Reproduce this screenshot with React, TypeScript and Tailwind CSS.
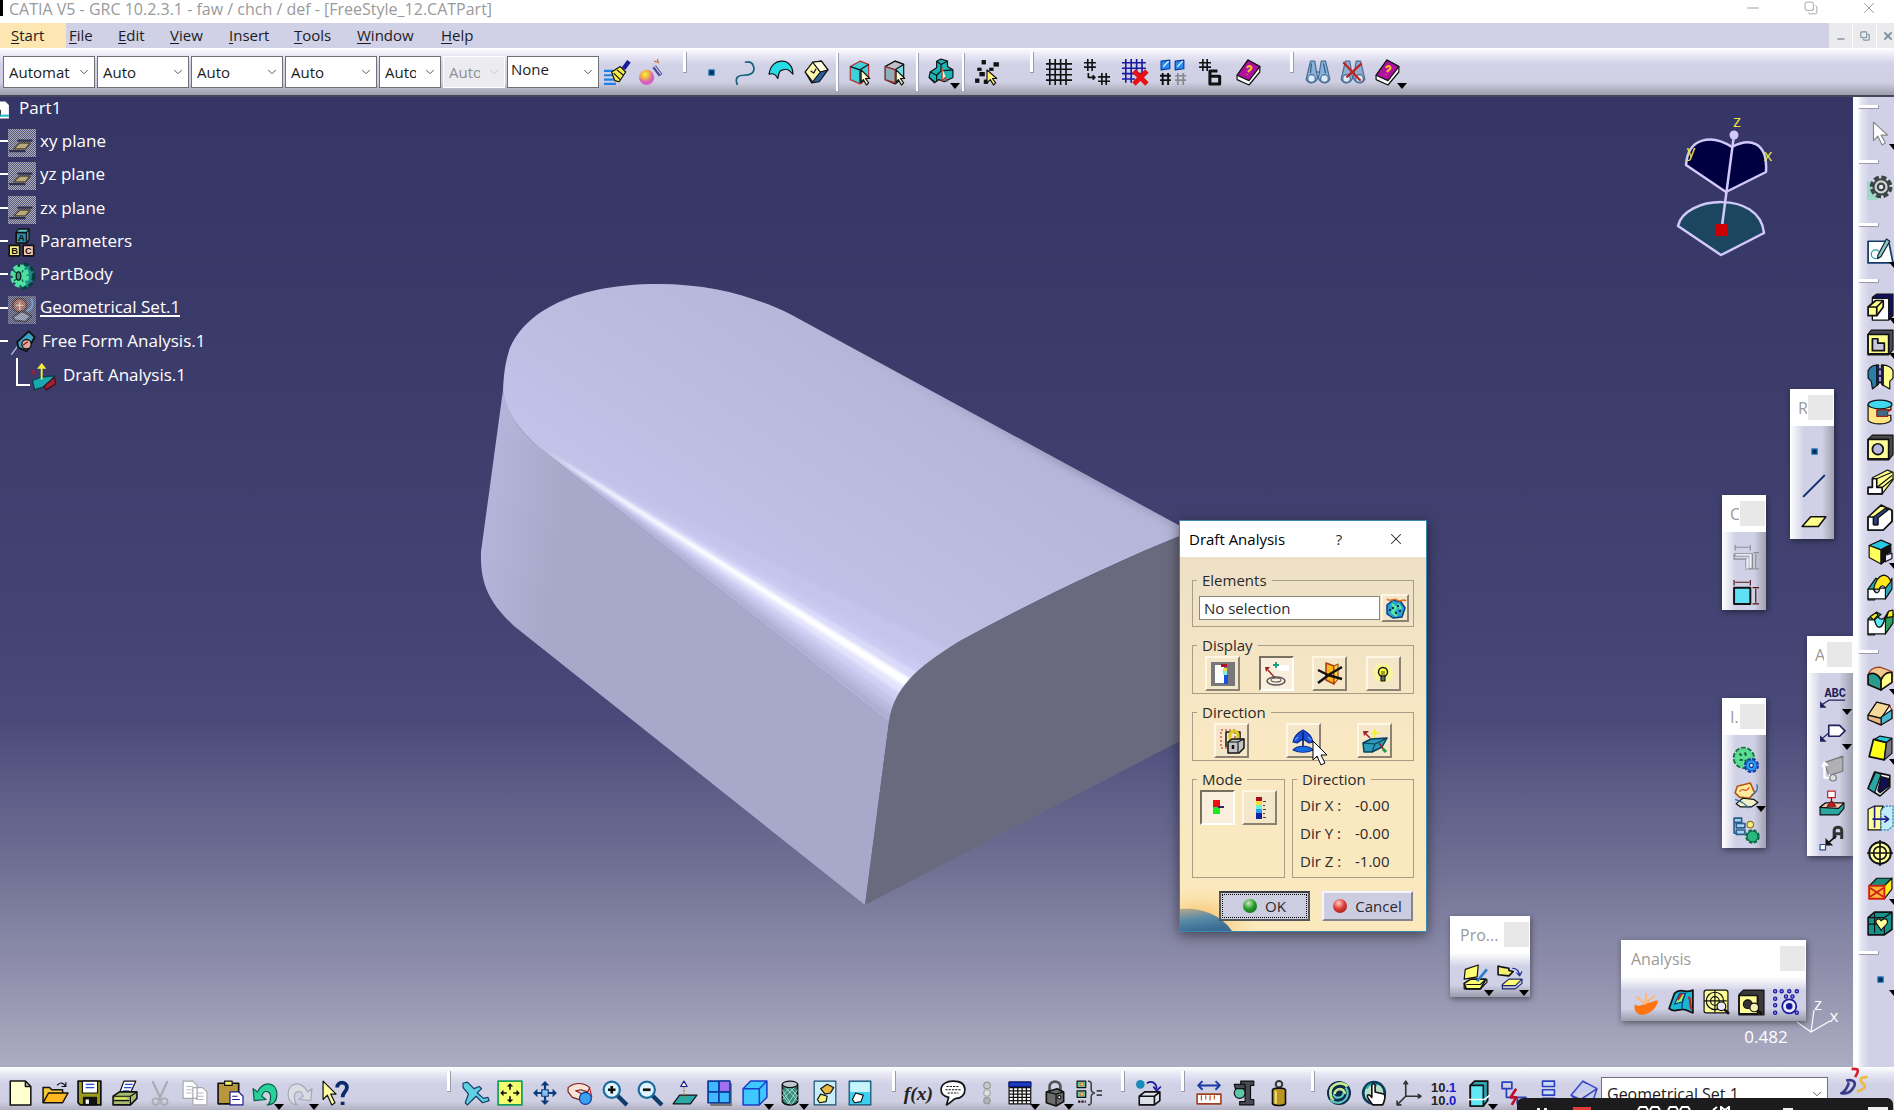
import type { ReactNode } from "react";
import { ChevronDown, Copy, Minus, X } from "lucide-react";

const icons: Record<string, ReactNode> = {
  brush: (
    <>
      <path d="M0 11h9M0 15h8M0 19h9M0 23h11" stroke="#1f7fe8" strokeWidth="2" />
      <path d="M7 12l8-5 5 5-6 9-4-1z" fill="#f5ee4a" />
      <path d="M9 13l6 6M12 10l6 5" />
      <path d="M18 9l5-7" stroke="#1a1a9c" strokeWidth="4" />
    </>
  ),
  wand: (
    <>
      <circle cx="7" cy="17" r="7" fill="url(#ballFill)" stroke="none" />
      <path d="M14 7l6 8" stroke="#4b4b9c" strokeWidth="4" />
      <path d="M14 6l6 8" stroke="#d8d8f4" strokeWidth="1" />
      <path d="M14 2l4 1M17 0l1 4" stroke="#d07030" />
    </>
  ),
  point: <rect x="10" y="10" width="5" height="5" fill="#003060" stroke="#2a80c0" strokeWidth="1" />,
  curve: <path d="M4 24c-3-8 2-9 6-9s11-1 9-8c-1-4-4-5-8-4" stroke="#14647e" strokeWidth="1.600" />,
  surface: <path d="M1 14C2 6 7 2 13 2s10 5 10 12c-4-5-7-5-9-4-4 0-4 4-5 8-2-4-5-5-8-4z" fill="#26dde6" />,
  yellowBox: (
    <>
      <path d="M2 12l7-9 8-1 6 8-8 11-7 1z" fill="#2a5f98" />
      <path d="M2 12l7-9 7 9-7 9z" fill="#fdf8b0" />
      <path d="M9 3l8-1 6 8-7 2z" fill="#fffde0" />
      <path d="M7 11l3 2 2-4" />
    </>
  ),
  cubePick: (
    <>
      <path d="M3 7l9-5 8 3v12l-8 6-9-4z" fill="#3fcfd8" stroke="#c02a2a" />
      <path d="M3 7l9 3v12M12 10l8-5" />
      <path d="M13 10v12l2-3 3 5 2-2-3-4h4z" fill="#fff8c8" />
    </>
  ),
  cubePick2: (
    <>
      <path d="M3 7l9-5 8 3v12l-8 6-9-4z" fill="#6fdce2" />
      <path d="M3 7l9-5 8 3-8 5z" fill="#c0c0cc" />
      <path d="M3 7v12l9 3V10z" fill="#8fb0b8" stroke="#a03030" />
      <path d="M13 10v12l2-3 3 5 2-2-3-4h4z" fill="#fff8c8" />
    </>
  ),
  blocksPick: (
    <>
      <path d="M8 2l4-2 6 2v5l5 3v7l-8 4-5-2-4 3-5-5 1-5 6-4z" fill="#1db4b8" />
      <path d="M8 2l4 3 6-3M12 5v6l11-1M2 12l6 3 4-4M8 15v6M1 17l5 4" />
      <path d="M13 8v12l3-3 2 4" stroke="#c02a2a" fill="#fff8c8" />
    </>
  ),
  dotsPick: (
    <>
      <g fill="#111" stroke="none">
        <rect x="7" y="1" width="4" height="4" />
        <rect x="18" y="3" width="5" height="4" />
        <rect x="3" y="8" width="4" height="3" />
        <rect x="14" y="8" width="4" height="3" />
        <rect x="5" y="12" width="5" height="4" />
        <rect x="1" y="18" width="4" height="4" />
        <rect x="9" y="19" width="4" height="4" />
      </g>
      <path d="M12 10v12l3-3 3 5 2-2-3-4h4z" fill="#fff07a" />
    </>
  ),
  grid: <path d="M0 4.500h24M0 9.500h24M0 14.500h24M0 19.500h24M3.500 0v24M8.500 0v24M13.500 0v24M18.500 0v24" strokeWidth="1.500" />,
  gridSnap: <path d="M0 3.500h11M0 7.500h11M3.500 0v11M7.500 0v11M13 16.500h11M13 20.500h11M16.500 13v11M20.500 13v11M4 13v4h6M8 15l2 2-2 2" strokeWidth="1.500" />,
  gridX: (
    <>
      <path d="M0 3.500h22M0 8.500h22M0 13.500h22M0 18.500h12M3.500 0v22M8.500 0v22M13.500 0v14M18.500 0v14" stroke="#1a1a9c" strokeWidth="1.500" />
      <path d="M11 11l12 12M23 11L11 23" stroke="#e81010" strokeWidth="4.500" />
    </>
  ),
  gridFour: (
    <>
      <path d="M1 2l8-1v8l-8 1zM14 2l8-1v8l-8 1z" fill="#2a8cf0" stroke="#0a3c9c" />
      <path d="M3 7l5-5M16 7l5-5" stroke="#fff" />
      <path d="M0 15.500h10M0 19.500h10M2.500 13v11M7.500 13v11" strokeWidth="1.800" />
      <path d="M14 15.500h10M14 19.500h10M16.500 13v11M21.500 13v11" stroke="#888" strokeWidth="1.500" />
    </>
  ),
  gridLock: (
    <>
      <path d="M1 3.500h11M1 7.500h11M4.500 0v11M8.500 0v11" strokeWidth="1.500" />
      <path d="M18 11h-7v12h9v-7h-8" strokeWidth="2.800" />
    </>
  ),
  book: (
    <>
      <path d="M1 15L11 1l11 6v5L12 24 1 19z" fill="#fff" />
      <path d="M1 15L11 1l11 6-10 13z" fill="#b010a0" />
      <path d="M10 8c3-3 6 0 3 2l-2 2M10 14v.500" stroke="#f5c020" strokeWidth="2" />
    </>
  ),
  binocular: (
    <>
      <path d="M5 2h4l2 12a5 5 0 0 1-10 5zM19 2h-4l-2 12a5 5 0 0 0 10 5z" fill="#88b4dc" stroke="#4a6c94" />
      <circle cx="6" cy="18" r="3.500" fill="#d8ecfa" stroke="#4a6c94" />
      <circle cx="18" cy="18" r="3.500" fill="#d8ecfa" stroke="#4a6c94" />
      <path d="M10 12h4M6 4l-1 9M17 4l2 9" stroke="#345880" />
    </>
  ),
  binocularX: (
    <>
      <path d="M5 2h4l2 12a5 5 0 0 1-10 5zM19 2h-4l-2 12a5 5 0 0 0 10 5z" fill="#8fb0cc" stroke="#4a6c94" />
      <circle cx="6" cy="18" r="3.500" fill="#d8ecfa" stroke="#4a6c94" />
      <circle cx="18" cy="18" r="3.500" fill="#d8ecfa" stroke="#4a6c94" />
      <path d="M3 3l16 17M20 4L6 17" stroke="#c42020" strokeWidth="2" />
    </>
  ),
  arrow: <path d="M6 2v17l4-4 4 8 3-2-4-7h6z" fill="#fff" stroke="#888" />,
  gear: (
    <>
      <path d="M0 5l10 4v14H0z" fill="#9fd8c8" stroke="none" />
      <circle cx="13" cy="11" r="9" stroke="#3c4444" strokeWidth="3" strokeDasharray="4.700 2.370" />
      <circle cx="13" cy="11" r="7" fill="#cfd4d4" stroke="#3c4444" strokeWidth="1.800" />
      <circle cx="13" cy="11" r="3" fill="#e8e8f0" stroke="#3c4444" strokeWidth="2" />
    </>
  ),
  sketch: (
    <>
      <path d="M1 3h19l4 20H1z" fill="#fff" stroke="#123c6c" strokeWidth="1.600" />
      <circle cx="8" cy="15" r="4" stroke="#2a9c9c" />
      <path d="M10 16l8-15 3 2-8 14-3 2z" fill="#8fc8c8" stroke="#123" />
    </>
  ),
  pad: (
    <>
      <path d="M5 3l4-3h15v20l-4 4H5z" fill="#101060" />
      <path d="M5 4h15v20H5z" fill="#fff" />
      <path d="M1 12l7-6h7v6l-6 8H1z" fill="#ffff8c" strokeWidth="1.600" />
      <path d="M1 12h8v8M9 12l6-6" strokeWidth="1.600" />
    </>
  ),
  pocket: (
    <>
      <path d="M1 5l3-4h20v18l-4 5H1z" fill="#4a4a5c" />
      <path d="M1 5h19v18H1z" fill="#ffff8c" strokeWidth="1.600" />
      <path d="M5 9h5v4h6v7H5z" fill="#c8c8dc" strokeWidth="1.600" />
    </>
  ),
  shaft: (
    <>
      <path d="M1 6c3-5 6-5 9-5v18l-5 4-1-7-3-3z" fill="#2a7fa8" />
      <path d="M14 1c5 0 8 1 10 5v7l-3 3v7l-7-4z" fill="#ffff8c" />
      <path d="M9 1h6v19l-3-3-3 3z" fill="#20205c" />
      <path d="M12 0v24" stroke="#fff" strokeDasharray="4 2" />
    </>
  ),
  groove: (
    <>
      <path d="M1 5v15c4 4 17 4 21 0v-5H10v-5h12V5z" fill="#ffe680" />
      <ellipse cx="12" cy="5" rx="11" ry="4" fill="#3fd8f0" />
      <path d="M9 10h13l-3 2v4H9z" fill="#3a6c84" stroke="#a02020" />
    </>
  ),
  hole: (
    <>
      <path d="M1 5l4-4h19v18l-4 5H1z" fill="#4a4a4a" />
      <path d="M1 5h19v18H1z" fill="#ffff99" strokeWidth="1.600" />
      <circle cx="10" cy="14" r="5" fill="#b8b8dc" strokeWidth="1.600" />
    </>
  ),
  rib: (
    <>
      <path d="M5 8L19 1l5 2v7L14 23H1v-6h4z" fill="#ffff8c" />
      <path d="M1 17h4V9h4v8h5v6H1z" fill="#fff" strokeWidth="1.500" />
      <path d="M9 9L23 3M9 17l14-11M14 17l10-8" />
    </>
  ),
  slot: (
    <>
      <path d="M1 12L13 1l10 5v10l-8 8H1z" fill="#ffff8c" strokeWidth="1.500" />
      <path d="M1 12h5v7h4v-7l10-8 3 2v10l-8 8H1z" fill="#fff" strokeWidth="1.500" />
      <path d="M6 12l11-8 3 1-10 8v6H6z" fill="#2a3f84" />
    </>
  ),
  combine: (
    <>
      <path d="M2 6l11-5 9 4-9 5z" fill="#2ac8e0" />
      <path d="M2 6l11 4v13L2 17z" fill="#ffff5c" />
      <path d="M13 10l9-5v7l-5 2v6l-4 3z" fill="#111" />
      <path d="M17 15l6-2v5l-6 3z" fill="#e8e8ff" />
    </>
  ),
  loft: (
    <>
      <path d="M1 14L8 4l5 1-6 10v9H1zM17 12l6-8v10l-6 9z" fill="#2aa8b8" />
      <path d="M6 14c2-9 5-12 9-13 4 0 6 3 7 6l-5 6c-2-3-4-3-6 1z" fill="#ffe81a" />
      <path d="M1 23V14h5c2 5 5 4 6-1h5v10z" fill="#fff" />
    </>
  ),
  loftCut: (
    <>
      <path d="M1 9L9 3l4 2-6 5v14H1zM17 10l2-7 5 1v9l-7 10z" fill="#2a9c5c" />
      <path d="M3 7l6-4 1 3-4 4zM18 8l2-6 4-1v6z" fill="#f5ee2a" />
      <path d="M1 23V10h6c2 9 7 9 9 0h1v13z" fill="#fff" />
      <path d="M7 10c2 9 6 9 9 0l2-5c-3 6-6 5-8 2z" fill="#5ce8f5" />
    </>
  ),
  fillet: (
    <>
      <path d="M1 10C2 4 7 2 12 2l11 4v10l-10 7-12-5z" fill="#f5c890" stroke="#a04020" />
      <path d="M1 9c5-3 10 0 12 5v9L1 18z" fill="#2a9c8c" strokeWidth="1.500" />
      <path d="M13 14c1-4 5-8 10-7v9l-10 7z" fill="#ffff8c" strokeWidth="1.500" />
    </>
  ),
  chamfer: (
    <>
      <path d="M1 14L9 2l12 3 2 5v7l-11 6-11-5z" fill="#fff" stroke="#a04020" />
      <path d="M1 14L9 2l12 3-8 12z" fill="#f8d898" />
      <path d="M13 23V16l10-7v8z" fill="#4ab8d0" />
      <path d="M1 14l12 3v6L1 18z" fill="#e8b888" />
    </>
  ),
  draft: (
    <>
      <path d="M7 4l5-3 11 2-5 4z" fill="#2ac8d8" />
      <path d="M6 4l12 3-2 16L2 20z" fill="#ffff1a" strokeWidth="1.600" />
      <path d="M18 7l5-4v14l-7 6z" fill="#7a7a84" />
    </>
  ),
  shell: (
    <>
      <path d="M1 17L7 2l14 3v11l-9 8z" fill="#f0f0f8" strokeWidth="1.500" />
      <path d="M1 17L8 2l5 2-6 17z" fill="#2aa8a8" />
      <path d="M13 6l7 2v7l-8 6-2-2z" fill="#101050" />
    </>
  ),
  thickness: (
    <>
      <path d="M1 4l6-3h8l-2 4v18H1z" fill="#ffff99" />
      <path d="M13 5l4-4h7v18l-4 4h-7z" fill="#c0ecf8" stroke="#2a7fb8" strokeDasharray="2 1" />
      <path d="M7 1v20M5 13h14M16 10l4 3-4 3" stroke="#20208c" strokeWidth="1.500" />
    </>
  ),
  target: (
    <>
      <circle cx="12" cy="12" r="10" fill="#ffff99" strokeWidth="1.800" />
      <circle cx="12" cy="12" r="6" strokeWidth="1.500" />
      <path d="M0 12h24M12 0v24" strokeWidth="1.500" />
    </>
  ),
  boxX: (
    <>
      <path d="M2 10L9 3h14l-7 7z" fill="#1a8c7c" />
      <path d="M16 10l7-7v10l-7 9z" fill="#ffee1a" />
      <path d="M2 10h14v12H2z" fill="#ffb83a" stroke="#d02010" strokeWidth="1.800" />
      <path d="M3 12l12 8M15 12L3 20" stroke="#d02010" strokeWidth="1.600" />
    </>
  ),
  boxHeart: (
    <>
      <path d="M1 7l6-5h16v16l-7 5H1z" fill="#16928c" strokeWidth="1.500" />
      <path d="M1 7h15l7-5M16 7v16M7 3v18M1 13h10" />
      <path d="M8 10c2-3 4-2 5 0 2-3 6-2 6 1s-4 4-6 8c-1-4-5-5-5-9z" fill="#ffff99" />
    </>
  ),
  line: <path d="M2 22L22 2" stroke="#0a2a6c" strokeWidth="1.800" />,
  plane: <path d="M1 17L9 8h14l-7 9z" fill="#ffff8c" strokeWidth="1.400" />,
  dimGray: (
    <>
      <path d="M2 1v5M16 1v5M3 3h12M1 9h17v14h-6V14H1zM1 11h15v12M19 8h5M19 23h5M21 9v13" stroke="#8c8c94" />
      <path d="M3 10h13v12M13 14v9" stroke="#fff" />
    </>
  ),
  dimBox: (
    <>
      <rect x="1" y="8" width="15" height="15" fill="#5fe0f4" strokeWidth="1.800" />
      <path d="M1 1v5M16 1v5M2 3h13M18 8h6M18 23h6M21 9v13" stroke="#501414" />
    </>
  ),
  gears: (
    <>
      <circle cx="10" cy="10" r="8.500" stroke="#0f6c3c" strokeWidth="3.500" strokeDasharray="4 1.340" />
      <circle cx="10" cy="10" r="8" fill="#5fdc94" stroke="#4fd88c" strokeWidth="1.500" />
      <path d="M6 6l2 2M11 5l1 3M6 12h3M11 12l2 2" stroke="#0f6c3c" strokeWidth="2" />
      <circle cx="17" cy="17" r="5.500" stroke="#103c9c" strokeWidth="3" strokeDasharray="3 1.320" />
      <circle cx="17" cy="17" r="5" fill="#2aa0f0" stroke="#1a60d0" />
      <circle cx="17" cy="17" r="1.800" fill="#fff" stroke="#103c9c" />
    </>
  ),
  sheet: (
    <>
      <path d="M4 4l12-3 4 9-5 5-9-1-4-4z" fill="#ffe8a0" stroke="#b05a10" strokeWidth="1.500" />
      <path d="M6 9c4-6 5 3 9-4" stroke="#d04010" />
      <path d="M3 20l6-5 10 1 4 3-6 4H7z" fill="#f0f0c8" />
      <path d="M2 16l7 3 6 5M22 2c2 5-1 8-5 10" stroke="#2a70a8" />
    </>
  ),
  treeGear: (
    <>
      <path d="M1 1h7v4H1zM3 6h8v4H3zM3 12h8v4H3zM1 1v14h2" fill="#a8d0f0" stroke="#2a5c8c" strokeWidth="1.500" />
      <circle cx="16" cy="7" r="3" fill="#ffee80" stroke="#8c7c20" />
      <circle cx="18" cy="18" r="5.500" stroke="#0f6c4c" strokeWidth="2.500" strokeDasharray="3 1.320" />
      <circle cx="18" cy="18" r="5" fill="#2ab87c" stroke="#0f6c4c" />
    </>
  ),
  textNote: (
    <>
      <text x="5" y="11" fontSize="11" fontWeight="700" fill="#20205c" stroke="none" fontFamily="Liberation Mono, monospace">ABC</text>
      <path d="M24 14H9l-6 4" stroke="#20205c" />
      <path d="M1 15v6h6z" fill="#20205c" stroke="none" />
    </>
  ),
  flagNote: (
    <>
      <path d="M9 5h10l5 5-5 5H9z" fill="#fff" stroke="#20205c" strokeWidth="1.500" />
      <path d="M9 12l-6 5" stroke="#20205c" />
      <path d="M1 14v6h6z" fill="#20205c" stroke="none" />
    </>
  ),
  datumGray: (
    <>
      <path d="M5 7l17-6v14L9 19z" fill="#b0b0b4" stroke="#77777c" />
      <path d="M5 8v13h6M3 11l2-4 3 3M9 18l4 4" stroke="#fff" strokeWidth="2" />
      <circle cx="13" cy="21" r="3" fill="#ddd" stroke="#77777c" />
    </>
  ),
  datum: (
    <>
      <path d="M1 16l5-4h17v5l-5 6H1z" fill="#2aa8a0" />
      <path d="M1 16l5-4h17l-5 5z" fill="#f8c8b0" />
      <rect x="8" y="1" width="7" height="6" fill="#fff" stroke="#c02020" />
      <path d="M11.500 7v3l-4 5h8l-4-5" fill="#c02020" stroke="#801010" />
    </>
  ),
  anchorA: (
    <>
      <path d="M14 13V5c0-4 7-4 7 0v8M14 8h7" strokeWidth="2.800" stroke="#333" />
      <path d="M16 10L8 17" strokeWidth="1.500" />
      <path d="M6 12v7h7z" fill="#111" stroke="none" />
      <rect x="1" y="18" width="5" height="5" fill="#fff" stroke="#20508c" />
    </>
  ),
  openBox: (
    <>
      <path d="M2 13L3 4l12-4-1 11z" fill="#ffff70" />
      <path d="M2 17l6-4h14l-5 9H4z" fill="#ffff70" strokeWidth="1.500" />
      <path d="M2 17v5h15l6-6v-3M4 18h13l5-5" />
      <path d="M23 4l-9 11" stroke="#2a7fd0" strokeWidth="2.500" />
    </>
  ),
  folderBox: (
    <>
      <path d="M1 9V1l4 1 6 1v2l4 1-4 4z" fill="#f5f070" strokeWidth="1.500" />
      <path d="M14 3c5 0 6 3 7 6M18 7l3 3 2-4" stroke="#1a2a9c" />
      <path d="M5 18l6-5h12l-6 6H5z" fill="#ffff70" stroke="#1a2a6c" />
      <path d="M5 18v4h12l6-5v-4" stroke="#1a2a6c" />
    </>
  ),
  orangeBlob: (
    <>
      <path d="M2 14c4 4 8-1 12-1 5-1 7-3 9-2-1 6-6 12-15 13-5-1-8-5-6-10z" fill="#ff7410" stroke="none" />
      <path d="M3 7l9 7M20 6l-7 6M12 4v9" stroke="#ffb878" strokeWidth="2" />
    </>
  ),
  curvature: (
    <>
      <path d="M1 18L6 4c6-6 11 1 17-3v21c-4-1-6-4-11-3-4 0-6 3-11-1z" fill="#1ab8d0" strokeWidth="1.600" />
      <path d="M6 14l5-10h5l-3 8z" fill="#8cf060" stroke="#083c8c" />
      <path d="M9 10l4-6M19 7c3 4 0 8 3 12" stroke="#c02020" strokeWidth="2" />
      <path d="M16 4c-1 5-4 8-3 14" stroke="#083c8c" />
    </>
  ),
  targetLens: (
    <>
      <rect x="1" y="1" width="22" height="21" rx="2" fill="#ffff99" />
      <circle cx="11" cy="11" r="8" />
      <circle cx="11" cy="11" r="4" />
      <path d="M1 11h21M11 1v21" />
      <circle cx="17" cy="16" r="4" fill="#e8e8ff" />
      <path d="M20 19l4 4" strokeWidth="2.500" />
    </>
  ),
  holeLens: (
    <>
      <path d="M1 5l4-4h19v23H1z" fill="#3a3a3a" />
      <rect x="1" y="6" width="17" height="17" fill="#ffff99" strokeWidth="1.600" />
      <circle cx="9" cy="14" r="4" fill="#333" />
      <circle cx="15" cy="17" r="4" fill="#f8f0b0" />
      <path d="M18 20l4 3" strokeWidth="2.500" />
    </>
  ),
  dotsGear: (
    <>
      <g fill="#8c8cf0" stroke="#1a1a9c">
        <circle cx="2" cy="2" r="1.500" />
        <circle cx="8" cy="2" r="1.500" />
        <circle cx="15" cy="2" r="1.500" />
        <circle cx="22" cy="2" r="1.500" />
        <circle cx="2" cy="9" r="1.500" />
        <circle cx="12" cy="7" r="1.500" />
        <circle cx="18" cy="7" r="1.500" />
        <circle cx="2" cy="15" r="1.500" />
        <circle cx="2" cy="22" r="1.500" />
        <circle cx="22" cy="22" r="1.500" />
      </g>
      <circle cx="15" cy="16" r="6.500" fill="#e8e8ff" stroke="#1a1a9c" strokeWidth="1.600" />
      <circle cx="15" cy="16" r="2.500" fill="#1a1a9c" stroke="#1a1a9c" />
    </>
  ),
  newDoc: <path d="M3 1h14l5 5v17H3zM17 1v5h5" fill="#ffffd0" strokeWidth="1.400" />,
  openDoc: (
    <>
      <path d="M1 21V7h6l2 2h10v3" fill="#f5c83a" strokeWidth="1.400" />
      <path d="M1 21l5-9h18l-5 9z" fill="#ffb820" strokeWidth="1.400" />
      <path d="M14 5c3-4 6-2 8 1M22 2v4h-4" />
    </>
  ),
  save: (
    <>
      <path d="M1 1h21v22H3l-2-2z" fill="#9c9c1a" strokeWidth="1.600" />
      <rect x="5" y="1" width="14" height="11" fill="#fff" />
      <path d="M8 4h8M8 7h8" stroke="#2a50d0" />
      <path d="M6 16h12v7H6z" fill="#111" />
      <path d="M8 18h3v4H8z" fill="#fff" stroke="none" />
    </>
  ),
  print: (
    <>
      <path d="M7 12l4-11h11l-5 11z" fill="#fff" />
      <path d="M12 4h7M11 7h7M10 10h6" stroke="#2a50d0" />
      <path d="M1 15l6-4h16v6l-6 6H1z" fill="#a8bc70" strokeWidth="1.500" />
      <path d="M1 15h16l6-4M17 15v8M2 19h14" />
      <path d="M3 17h11" stroke="#f5ee3a" />
    </>
  ),
  cut: (
    <>
      <path d="M5 1l8 17M19 1l-8 17" stroke="#aaaab4" strokeWidth="2" />
      <circle cx="8" cy="20" r="3" stroke="#aaaab4" strokeWidth="1.500" />
      <circle cx="16" cy="20" r="3" stroke="#aaaab4" strokeWidth="1.500" />
    </>
  ),
  copy: (
    <>
      <path d="M1 1h9l4 4v12H1zM10 7h9l4 4v12H10z" fill="#fff" stroke="#a8a8b0" />
      <path d="M4 6h6M4 9h5M4 12h5M13 12h7M13 15h7M13 18h7" stroke="#b8b8c0" />
    </>
  ),
  paste: (
    <>
      <rect x="1" y="3" width="19" height="19" fill="#b8963c" strokeWidth="1.500" />
      <path d="M7 5V1h7v4z" fill="#f5ee70" />
      <path d="M12 11h8l4 4v8H12z" fill="#fff" stroke="#1a1a8c" />
      <path d="M14 15h5M14 18h7" stroke="#1a1a8c" />
    </>
  ),
  undo: <path d="M1 8l1 11 11-1-4-3c2-7 9-5 8 2 0 3-1 5-3 6 6 0 9-4 9-10C23 2 11 0 5 11z" fill="#2ad09c" stroke="#0a5c44" />,
  redo: <path d="M23 8l-1 11-11-1 4-3C13 8 6 10 7 17c0 3 1 5 3 6-6 0-9-4-9-10C1 2 13 0 19 11z" fill="#dcdce4" stroke="#a8a8b4" />,
  help: (
    <>
      <path d="M1 1v17l4-4 4 9 3-2-4-8h5z" fill="#ffffa0" />
      <path d="M14 7c0-6 9-6 9 0 0 4-4 4-4 9M19 20v3" stroke="#0a2a6c" strokeWidth="3.500" />
    </>
  ),
  fly: <path d="M1 3l4-1 6 6 5-2 2 2-4 4 6 5 4-1 1 3-6 2-6-6-8 8-2-2 3-8-5-6z" fill="#5fd0e0" stroke="#103c6c" />,
  fit: (
    <>
      <rect x="1" y="1" width="22" height="22" fill="#f5ff70" stroke="#1a9c5c" strokeWidth="1.600" />
      <path d="M12 9V4M12 15v5M9 12H4M15 12h5" strokeWidth="1.500" />
      <path d="M9 6l3-3 3 3zM9 18l3 3 3-3zM6 9l-3 3 3 3zM18 9l3 3-3 3z" fill="#111" stroke="none" />
    </>
  ),
  pan: (
    <>
      <path d="M12 2v20M2 12h20" stroke="#0a3c7c" strokeWidth="2" />
      <path d="M8 5l4-4 4 4zM8 19l4 4 4-4zM5 8l-4 4 4 4zM19 8l4 4-4 4z" fill="#0a3c7c" stroke="none" />
      <rect x="9" y="9" width="6" height="6" fill="#8cc0f0" stroke="#0a3c7c" />
    </>
  ),
  rotate: (
    <>
      <path d="M1 7c6-5 14-5 20 0l-2 4-6-2-5 1 8 4-2 5-9-3-4-5z" fill="#f8e4d4" stroke="#802020" />
      <circle cx="17" cy="17" r="5.500" fill="#3aa0f0" stroke="#103c9c" />
      <path d="M21 8l2 8" stroke="#c02020" />
    </>
  ),
  zoomIn: (
    <>
      <path d="M14 14l9 9" stroke="#103c6c" strokeWidth="4" />
      <circle cx="9" cy="9" r="7.500" fill="#e0f4ff" stroke="#1a6c9c" strokeWidth="2" />
      <path d="M9 5.500v7M5.500 9h7" strokeWidth="2.500" />
    </>
  ),
  zoomOut: (
    <>
      <path d="M14 14l9 9" stroke="#103c6c" strokeWidth="4" />
      <circle cx="9" cy="9" r="7.500" fill="#e0f4ff" stroke="#1a6c9c" strokeWidth="2" />
      <path d="M5.500 9h7" strokeWidth="2.500" />
    </>
  ),
  normal: (
    <>
      <path d="M1 22l6-8h16l-6 8z" fill="#2aa8a8" />
      <path d="M11 17V5" stroke="#b08010" strokeDasharray="2 1" />
      <path d="M8 6l3-5 3 5z" fill="#fff" stroke="#1a1a9c" />
    </>
  ),
  multiView: (
    <>
      <rect x="3" y="3" width="20" height="21" fill="#777" stroke="none" />
      <rect x="1" y="1" width="20" height="20" fill="#3fb8ff" stroke="#0a3c9c" strokeWidth="1.600" />
      <rect x="11" y="1" width="10" height="10" fill="#a070f0" stroke="#0a3c9c" />
      <path d="M11 1v20M1 11h20" stroke="#0a3c9c" strokeWidth="1.600" />
    </>
  ),
  isoCube: <path d="M1 8l7-7h15v15l-7 7H1zM1 8h15v15M16 8l7-7" fill="#3fc8ff" stroke="#1a3cc8" strokeWidth="1.400" />,
  cylinder: (
    <>
      <path d="M5 4v16c2 4 12 4 14 0V4z" fill="#3a8c7c" strokeWidth="1.500" />
      <path d="M5 9l8 14M5 14l6 8M8 7l11 12M12 7l7 8M19 9l-9 13M19 14l-5 8M16 7L5 18M12 7l-7 7" stroke="#a8e8d8" strokeWidth=".8" />
      <ellipse cx="12" cy="4" rx="7" ry="3" fill="#c0c8d0" />
    </>
  ),
  hideShow: (
    <>
      <rect x="2" y="1" width="20" height="22" fill="#c8ecf8" stroke="#1a4c6c" />
      <path d="M8 8l6-4 6 3-3 5-5 1z" fill="#e8b840" />
      <path d="M5 18l3-5 6 2-1 5-6 1z" fill="#f5ee80" />
    </>
  ),
  swapSpace: (
    <>
      <rect x="2" y="1" width="20" height="22" fill="#3fd0f0" stroke="#1a4c6c" />
      <rect x="3" y="2" width="18" height="9" fill="#c8f4fc" stroke="none" />
      <path d="M5 18l3-6 7 2-2 6-6 1z" fill="#fff" />
    </>
  ),
  formula: <text x="-2" y="18" fontSize="18" fontStyle="italic" fontWeight="700" fill="#222" stroke="none" fontFamily="Liberation Serif, serif">f(x)</text>,
  comment: (
    <>
      <path d="M12 1c7 0 11 3 11 8s-4 8-8 8c-2 0-5 4-9 6l2-7C3 15 1 12 1 9c0-5 5-8 11-8z" fill="#fff" strokeWidth="1.500" />
      <path d="M6 6h12M5 9h14M7 12h10" strokeDasharray="2 1" />
    </>
  ),
  linkGray: (
    <>
      <circle cx="12" cy="5" r="3" fill="#c8c8cc" stroke="#999" />
      <circle cx="12" cy="12" r="3" fill="#e0e0e0" stroke="#aaa" />
      <circle cx="12" cy="19" r="3" fill="#b0b0b4" stroke="#999" />
    </>
  ),
  table: (
    <>
      <rect x="1" y="2" width="20" height="20" fill="#fff" />
      <path d="M1 7h20M1 10h20M1 13h20M1 16h20M1 19h20M5 7v15M9 7v15M13 7v15M17 7v15" strokeWidth="1.200" />
      <rect x="1" y="2" width="20" height="4" fill="#1a3cc0" stroke="#0a1c8c" />
    </>
  ),
  lock: (
    <>
      <path d="M7 11V6c0-6 10-6 10 0v5" stroke="#555" strokeWidth="2.500" />
      <path d="M4 11l10-3 6 3v9l-7 4-9-3z" fill="#6c6c6c" strokeWidth="1.500" />
      <path d="M13 13v10M4 11l9 2 7-2" />
      <circle cx="16" cy="16" r="1.500" fill="#fff" />
    </>
  ),
  equiv: (
    <>
      <rect x="1" y="1" width="8" height="6" fill="#6cc8a8" />
      <rect x="1" y="10" width="8" height="6" fill="#6cc8a8" />
      <path d="M4 3h3v2H4zM4 12h3v2H4z" fill="#fff" stroke="#d08020" />
      <path d="M2 20h7" strokeDasharray="2 1" strokeWidth="2" />
      <path d="M11 1c4 0 3 3 3 6s0 4 3 5c-3 1-3 2-3 5s1 6-3 6M19 10h5M19 14h5" strokeWidth="1.500" stroke="#444" />
    </>
  ),
  cubeBall: (
    <>
      <circle cx="4" cy="4" r="4" fill="#1a8cb8" stroke="none" />
      <path d="M10 3c5-3 9 0 9 5M16 6l3 4 4-4" stroke="#1a1a9c" strokeWidth="1.600" />
      <path d="M3 15l5-4h14v8l-5 4H3zM3 15h14v8M17 15l5-4" fill="#e0e0e8" strokeWidth="1.500" />
    </>
  ),
  ruler: (
    <>
      <path d="M2 5h20M6 1L2 5l4 4M18 1l4 4-4 4" stroke="#1a3ca0" strokeWidth="1.800" />
      <rect x="1" y="13" width="22" height="9" fill="#fff" stroke="#a04020" strokeWidth="1.500" />
      <path d="M5 14v5M9 14v4M13 14v5M17 14v4" stroke="#c05020" />
    </>
  ),
  caliper: (
    <>
      <path d="M9 1h12v4h-3v13h3v5H8v-3h5V6H9z" fill="#4a4a54" />
      <circle cx="8" cy="12" r="5" fill="#5cc8a8" />
      <path d="M3 4h10v4H4z" fill="#4a4a54" />
    </>
  ),
  weight: (
    <>
      <circle cx="12" cy="4" r="3" stroke="#333" strokeWidth="1.800" />
      <path d="M6 9c1-2 11-2 12 0v13c-2 2-10 2-12 0z" fill="#b89420" strokeWidth="1.500" />
      <path d="M9 10v12" stroke="#f0dc70" strokeWidth="2" />
    </>
  ),
  update: (
    <>
      <circle cx="12" cy="12" r="10.500" fill="#0a2a4c" stroke="#0a2a4c" />
      <path d="M20 6C14 0 4 4 4 12c0 3 1 5 3 7M8 13c0-6 10-6 9 0" stroke="#c8e890" strokeWidth="2.500" />
      <path d="M4 18c6 6 16 2 16-6 0-2-1-4-2-5M16 12c0 5-9 6-9 1" stroke="#5cc8c0" strokeWidth="2" />
    </>
  ),
  handUpdate: (
    <>
      <circle cx="12" cy="12" r="10" fill="#b8e0c8" stroke="#0a3c5c" strokeWidth="2.500" />
      <path d="M5 8c2-5 7-5 10-3" stroke="#2aa8a8" strokeWidth="2" />
      <path d="M11 23c-3-4-6-7-5-9 2-1 3 1 4 2V5c0-2 3-2 3 0v6l8 2c2 1 1 6-1 10z" fill="#fff" strokeWidth="1.500" />
    </>
  ),
  axis: <path d="M9 1v14h14M9 15l-8 8M7 4l2-3 2 3M20 13l3 2-3 2M1 19v4h4" strokeWidth="1.500" stroke="#333" />,
  tolerance: (
    <g fontSize="12" fontWeight="700" stroke="none" fontFamily="Liberation Sans, sans-serif">
      <text x="0" y="11" fill="#222">10<tspan fill="#1a1ac8">.1</tspan></text>
      <text x="0" y="23" fill="#222">10<tspan fill="#1a1ac8">.0</tspan></text>
    </g>
  ),
  boxCyan: (
    <>
      <path d="M4 5l4-4h12v18l-4 5H4z" fill="#2aa8b8" strokeWidth="1.600" />
      <rect x="4" y="5" width="12" height="19" fill="#5fe8f4" strokeWidth="1.500" />
      <path d="M2 18h15l5-4" stroke="#fff" strokeWidth="1.500" />
    </>
  ),
  linkBreak: (
    <>
      <path d="M1 2h9v6H1zM5 8v8h6M15 16h8v6h-8z" stroke="#2a40c0" strokeWidth="1.600" />
      <path d="M14 8l-5 8h5l-4 7" stroke="#c01030" strokeWidth="2.500" />
    </>
  ),
  stack: <path d="M6 1h11v5H6zM6 9h11v5H6zM6 17h11v5H6z" fill="#c8dcfa" stroke="#2a40c0" strokeWidth="1.500" />,
  prism: <path d="M0 14L11 1l13 7-3 9-12 5zM11 1l3 2M0 14l9 4 15-10M9 18v4" fill="#c4ccf0" stroke="#3a48c0" strokeWidth="1.400" />,
  hand: (
    <>
      <path d="M4 9l6-5 8 2 4 6-3 9-9 1-6-4z" fill="#2aa0d0" stroke="#0a3c8c" strokeWidth="1.500" />
      <path d="M4 3c4 4 7-2 10 1s6-2 9 1" stroke="#e07020" strokeWidth="1.600" />
      <path d="M9 8l4 4-4 4 5 4M15 8l3 5" stroke="#5ce89c" strokeWidth="2.500" />
      <path d="M9 12h2M14 10h2M12 17h2M6 14h2M16 15h2" stroke="#06304c" strokeWidth="2" />
    </>
  ),
  colorScale: (
    <>
      <rect x="0" y="0" width="24" height="24" fill="#77777c" stroke="none" />
      <path d="M4 3h9v18H4z" fill="#fff" stroke="none" />
      <path d="M10 2h6v3h-6z" fill="#b01020" stroke="none" />
      <path d="M12 6h4v3h-4z" fill="#ffd83a" stroke="none" />
      <path d="M12 9h4v4h-4z" fill="#7cf0e0" stroke="none" />
      <path d="M13 13h4v9h-4z" fill="#1a50e0" stroke="none" />
    </>
  ),
  flyProbe: (
    <>
      <path d="M11 3h14v6H15z" fill="#fff" stroke="none" />
      <path d="M12 0v6M9 3h6" stroke="#1a9c84" strokeWidth="1.800" />
      <path d="M4 8l7 8" stroke="#a02020" strokeWidth="1.400" />
      <path d="M1 5h5l-4 5z" fill="#a02020" stroke="none" />
      <ellipse cx="12" cy="19" rx="9" ry="4" stroke="#555" strokeWidth="1.500" />
      <ellipse cx="12" cy="18" rx="5" ry="2" stroke="#555" />
    </>
  ),
  noHighlight: (
    <>
      <path d="M8 1l8 3v18l-8-4z" fill="#ffb820" stroke="#b04010" strokeWidth="1.600" />
      <path d="M16 4l4-2v15l-4 5z" fill="#ffd84a" stroke="#b04010" />
      <path d="M0 8l10 5 14 4M24 5l-12 7-12 9" strokeWidth="2.500" />
    </>
  ),
  bulb: (
    <>
      <circle cx="12" cy="11" r="10" fill="#f8f4a0" stroke="none" />
      <circle cx="12" cy="10" r="4.500" fill="#ffff3a" strokeWidth="1.400" />
      <path d="M10 14h4v5h-4z" fill="#666" />
      <path d="M11 9v4M13 9v4" strokeWidth=".8" />
    </>
  ),
  lockDir: (
    <>
      <rect x="1" y="1" width="14" height="18" stroke="#d02020" strokeDasharray="2 2" />
      <path d="M6 18V3h14v9" strokeWidth="1.500" />
      <path d="M10 11V6c0-5 8-5 8 0v5" stroke="#d8cc20" strokeWidth="3" />
      <path d="M8 13l4-3h12v9l-5 5H8z" fill="#c4c4c4" strokeWidth="1.500" />
      <path d="M18 13v10M8 13h10l6-3" />
      <path d="M13 16v4" strokeWidth="2.500" />
    </>
  ),
  compass: (
    <>
      <path d="M2 13c1-5 4-9 10-12 6 3 9 7 10 12l-4 1-6-4-6 4z" fill="#1a50d8" stroke="#0a2a8c" />
      <path d="M12 3v17" stroke="#081c6c" strokeWidth="1.600" />
      <path d="M4 11l3-3M20 11l-3-3" stroke="#6ca0f8" />
      <path d="M2 21c4-5 16-5 20 0-6 3-14 3-20 0z" fill="#1a6ce8" stroke="#0a2a8c" />
    </>
  ),
  surfaceDir: (
    <>
      <path d="M12 0v9M8 4h9" stroke="#f5ee3a" strokeWidth="2" />
      <path d="M0 14l8-4 16-1-5 9-10 5H1z" fill="#2a9cb8" stroke="#06405c" strokeWidth="1.500" />
      <path d="M0 14l12 1 12-6M12 15l-3 8" stroke="#06405c" />
      <path d="M7 9L3 5M16 14l5 7" stroke="#a02020" strokeWidth="1.500" />
      <path d="M0 2h6l-5 5z" fill="#a02020" stroke="none" />
      <path d="M20 20l3 3" stroke="#1a9c4c" strokeWidth="3" />
    </>
  ),
  quickMode: (
    <>
      <rect x="7" y="4" width="7" height="7" fill="#f01010" stroke="none" />
      <rect x="7" y="11" width="7" height="7" fill="#20e820" stroke="none" />
      <path d="M12 11h6" strokeWidth="2" stroke="#402060" />
    </>
  ),
  fullMode: (
    <g stroke="none">
      <rect x="8" y="1" width="6" height="4" fill="#a01018" />
      <rect x="8" y="5" width="6" height="4" fill="#ffd83a" />
      <rect x="8" y="9" width="6" height="4" fill="#6cf0d8" />
      <rect x="8" y="13" width="6" height="4" fill="#2a9cf0" />
      <rect x="8" y="17" width="6" height="6" fill="#1020a0" />
      <path d="M15 5h3v1h-3zM15 9h2v1h-2zM15 13h3v1h-3zM15 17h2v1h-2zM15 21h3v1h-3z" fill="#444" />
    </g>
  ),
  planeHidden: (
    <>
      <rect width="24" height="24" fill="url(#dither)" stroke="none" />
      <path d="M1 19h14M8 10h13" stroke="#303050" strokeWidth="2" />
      <path d="M5 17l5-5h9l-4 5z" fill="#b8a880" stroke="#504830" />
    </>
  ),
  geoSet: (
    <>
      <circle cx="10" cy="8" r="6" fill="#8c4a44" stroke="#301010" strokeWidth="1.600" />
      <path d="M4 18l8-5 8 4-5 5-9-1z" fill="#7884a0" stroke="#112" strokeWidth="1.600" />
      <path d="M7 8h6M10 5v7" stroke="#f0c0a0" />
      <path d="M20 2c2 5 1 9-4 11" stroke="#4a80c0" strokeWidth="1.600" />
      <rect width="24" height="24" fill="url(#dither)" opacity="0.7" stroke="none" />
    </>
  ),
  blocks: (
    <>
      <path d="M7 3h9v9H7z" fill="#2a8ca4" strokeWidth="1.400" />
      <path d="M7 3l2-3h9l-2 3zM18 0v9l-2 3V3z" fill="#5cc0c8" />
      <path d="M1 14h9v9H1z" fill="#f0ee80" strokeWidth="1.400" />
      <path d="M13 14h9v9h-9z" fill="#f8c8b0" strokeWidth="1.400" />
      <g fontSize="8" fontWeight="700" fill="#111" stroke="none" fontFamily="Liberation Sans, sans-serif">
        <text x="8.500" y="10.500">A</text>
        <text x="2.800" y="21.500">B</text>
        <text x="14.500" y="21.500">C</text>
      </g>
    </>
  ),
  partGear: (
    <>
      <ellipse cx="14" cy="12" rx="8" ry="10" fill="#1a8c84" stroke="#06403c" strokeWidth="3" strokeDasharray="4 2" />
      <ellipse cx="10" cy="12" rx="6" ry="8" fill="#4fe0a0" stroke="#4fe0a0" strokeWidth="4" strokeDasharray="3.700 1.850" />
      <ellipse cx="9" cy="12" rx="2" ry="3.500" fill="#2a9c7c" />
      <path d="M5 8l2 1M13 7l-1 2M5 16l2-1M13 17l-1-2" stroke="#0a5c44" />
    </>
  ),
  freeForm: (
    <>
      <path d="M2 22l6-8" stroke="#a8c8e8" />
      <path d="M7 11L17 2l5 5-7 12-7-3z" fill="#3aa0c8" strokeWidth="1.600" />
      <circle cx="15" cy="13" r="4" fill="#e0a898" />
      <path d="M12 14l4-3" stroke="#802020" />
    </>
  ),
  draftTree: (
    <>
      <path d="M2 15l8-3 11-1-5 8-12 4z" fill="#1aa8b0" stroke="#06404c" />
      <path d="M21 12l1 6-8 5-2-3z" fill="#a02030" stroke="#401018" />
      <path d="M10 14V3" stroke="#f5ee3a" strokeWidth="1.600" />
      <path d="M6 5l4-5 4 5z" fill="#f5ee3a" stroke="none" />
      <path d="M1 6l4 4" stroke="#a02030" strokeWidth="2" />
    </>
  ),
  part: (
    <>
      <path d="M-8 0H9l5 5v19H-8z" fill="#fff" stroke="none" />
      <path d="M-4 8l6 4v9l-6 2z" fill="#1a3c6c" />
      <path d="M1 20h13" stroke="#2ab8c8" strokeWidth="3" />
    </>
  ),
};

function Icon({ name, className = "size-[26px]" }: { name: string; className?: string }) {
  return (
    <svg
      className={`shrink-0 overflow-visible ${className}`}
      viewBox="0 0 24 24"
      fill="none"
      stroke="#111"
      strokeWidth="1.1"
      strokeLinejoin="round"
      aria-hidden="true"
    >
      {icons[name]}
    </svg>
  );
}

interface ToolProps {
  icon: string;
  flyout?: boolean;
  className?: string;
}

function Tool({ icon, flyout, className = "h-[35px] w-[35px]" }: ToolProps) {
  return (
    <button type="button" aria-label={icon} className={`relative flex shrink-0 items-center justify-center ${className}`}>
      <Icon name={icon} />
      {flyout && (
        <svg className="absolute -right-0.5 bottom-0 h-1.5 w-2.5" viewBox="0 0 10 6" aria-hidden="true">
          <path d="M0 0h10L5 6z" fill="#000" />
        </svg>
      )}
    </button>
  );
}

// Grip that starts a toolbar section
function Grip({ className = "w-[25px]" }: { className?: string }) {
  return (
    <div className={`flex shrink-0 justify-end self-start pt-1 pr-1.5 ${className}`}>
      <div className="h-[21px] w-1 border-r border-b border-[#9a9aac] bg-white" />
    </div>
  );
}

function Divider({ className = "mx-1" }: { className?: string }) {
  return <div className={`h-[38px] w-[3px] shrink-0 border-r border-[#a0a0b4] bg-white ${className}`} />;
}

interface ComboProps {
  label: string;
  value: string;
  className: string;
  textClass?: string;
  disabled?: boolean;
}

function Combo({ label, value, className, textClass = "", disabled }: ComboProps) {
  return (
    <div className={`relative flex shrink-0 items-center ${className}`}>
      <select
        aria-label={label}
        disabled={disabled}
        defaultValue={value}
        className={`h-full w-full appearance-none border outline-none ${textClass} ${
          disabled ? "border-white bg-[#ececf0] text-[#8e8e96]" : "border-[#707078] bg-white text-[#1c1c1c]"
        }`}
      >
        <option>{value}</option>
      </select>
      <ChevronDown
        className={`pointer-events-none absolute right-1 size-3.5 ${disabled ? "text-[#c0c0c8]" : "text-[#444]"}`}
        strokeWidth={1.5}
      />
    </div>
  );
}

const menus = [
  { name: "Start", className: "w-[66px] bg-[#fde6b2] pl-[11px]" },
  { name: "File", className: "w-[49px] pl-[3px]" },
  { name: "Edit", className: "w-[52px] pl-[3px]" },
  { name: "View", className: "w-[59px] pl-[3px]" },
  { name: "Insert", className: "w-[65px] pl-[3px]" },
  { name: "Tools", className: "w-[63px] pl-[3px]" },
  { name: "Window", className: "w-[84px] pl-[3px]" },
  { name: "Help", className: "w-[60px] pl-[3px]" },
];

const combos = [
  { label: "Fill colour", value: "Automat", className: "w-[92px]", textClass: "pt-0.5 pl-[5px] pr-6" },
  { label: "Transparency", value: "Auto", className: "w-[92px]", textClass: "pt-0.5 pl-[5px] pr-6" },
  { label: "Line weight", value: "Auto", className: "w-[92px]", textClass: "pt-0.5 pl-[5px] pr-6" },
  { label: "Line type", value: "Auto", className: "w-[92px]", textClass: "pt-0.5 pl-[5px] pr-6" },
  { label: "Point symbol", value: "Auto", className: "w-[62px]", textClass: "pt-0.5 pl-[5px] pr-6" },
  { label: "Rendering", value: "Auto", className: "w-[62px]", textClass: "pt-0.5 pl-[5px] pr-6", disabled: true },
  { label: "Layer", value: "None", className: "w-[92px]", textClass: "pb-1 pl-[3px] pr-6" },
];

const treeNodes = [
  { name: "Part1", icon: "part", row: "gap-[3px]", link: "w-0" },
  { name: "xy plane", icon: "planeHidden", row: "gap-1", link: "w-2" },
  { name: "yz plane", icon: "planeHidden", row: "gap-1", link: "w-2" },
  { name: "zx plane", icon: "planeHidden", row: "gap-1", link: "w-2" },
  { name: "Parameters", icon: "blocks", row: "gap-1", link: "w-2" },
  { name: "PartBody", icon: "partGear", row: "gap-1", link: "w-2" },
  { name: "Geometrical Set.1", icon: "geoSet", row: "gap-1", link: "w-2", current: true },
  { name: "Free Form Analysis.1", icon: "freeForm", row: "gap-[5px]", link: "w-2" },
];

function TitleBar() {
  return (
    <header className="flex h-[23px] items-start bg-white text-[16px] text-[#9a9a9a]">
      <div className="mr-1.5 h-4 w-[3px] bg-black" />
      <h1 className="flex-1 leading-[18px]">CATIA V5 - GRC 10.2.3.1 - faw / chch / def - [FreeStyle_12.CATPart]</h1>
      <div className="-mr-1 flex h-4 items-center">
        <button type="button" aria-label="Minimize" className="flex w-[58px] justify-center">
          <Minus className="size-[18px]" strokeWidth={1.3} />
        </button>
        <button type="button" aria-label="Restore" className="flex w-[58px] justify-center">
          <Copy className="size-3.5 -scale-x-100 rotate-90" strokeWidth={1.5} />
        </button>
        <button type="button" aria-label="Close" className="flex w-[58px] justify-center">
          <X className="size-[18px]" strokeWidth={1.3} />
        </button>
      </div>
    </header>
  );
}

function MenuBar() {
  return (
    <nav className="flex h-[25px] items-stretch bg-[#d0d0e6] text-[15px] text-[#1c1c24]">
      {menus.map((menu) => (
        <button key={menu.name} type="button" className={`text-left ${menu.className}`}>
          <span className="underline underline-offset-2">{menu.name[0]}</span>
          {menu.name.slice(1)}
        </button>
      ))}
      <div className="ml-auto flex gap-px bg-white text-[#8494a4]">
        <button type="button" aria-label="Minimize document" className="flex w-[23px] items-center justify-center bg-[#ebebee] pt-1.5">
          <Minus className="size-2.5" strokeWidth={4} />
        </button>
        <button type="button" aria-label="Restore document" className="flex w-[23px] items-center justify-center bg-[#ebebee]">
          <Copy className="size-2.5 -scale-x-100 rotate-90" strokeWidth={3} />
        </button>
        <button type="button" aria-label="Close document" className="flex w-[17px] items-center justify-end bg-[#ebebee]">
          <X className="size-3" strokeWidth={4} />
        </button>
      </div>
    </nav>
  );
}

function TopToolbar() {
  return (
    <div className="flex h-[49px] items-center overflow-hidden border-b-2 border-[#45455c] bg-[linear-gradient(#fff,#e6e6f4_8px,#d1d1e7_17px,#d0d0e5_34px,#b4b4c4_41px,#9c9cac)] pl-[3px]">
      <div className="flex h-8 gap-0.5 text-[15px]">
        {combos.map((combo) => (
          <Combo key={combo.label} {...combo} />
        ))}
      </div>
      <Tool icon="brush" />
      <Tool icon="wand" />
      <Grip className="w-6" />
      <Tool icon="point" />
      <Tool icon="curve" />
      <Tool icon="surface" />
      <Tool icon="yellowBox" />
      <Divider className="mx-[3px]" />
      <Tool icon="cubePick" />
      <Tool icon="cubePick2" />
      <Divider />
      <Tool icon="blocksPick" flyout />
      <Divider />
      <Tool icon="dotsPick" />
      <Grip className="w-9" />
      <Tool icon="grid" className="h-[35px] w-[38px]" />
      <Tool icon="gridSnap" className="h-[35px] w-[38px]" />
      <Tool icon="gridX" className="h-[35px] w-[38px]" />
      <Tool icon="gridFour" className="h-[35px] w-[38px]" />
      <Tool icon="gridLock" className="h-[35px] w-[38px]" />
      <Tool icon="book" className="h-[35px] w-[38px]" />
      <Grip className="w-8" />
      <Tool icon="binocular" />
      <Tool icon="binocularX" />
      <Tool icon="book" flyout />
    </div>
  );
}

function SideGrip({ className }: { className: string }) {
  return (
    <div className={`flex w-full shrink-0 items-end pb-1.5 pl-1.5 ${className}`}>
      <div className="h-1 w-5 border-r border-b border-[#9a9aac] bg-white" />
    </div>
  );
}

function SideToolbar() {
  const design = ["pad", "pocket", "shaft", "groove", "hole", "rib", "slot", "combine", "loft", "loftCut"];
  const dress = ["fillet", "chamfer", "draft", "shell", "thickness", "target", "boxX", "boxHeart"];
  const flyouts = ["pad", "pocket", "combine", "fillet", "draft", "boxX"];
  return (
    <aside className="flex w-[41px] shrink-0 flex-col items-end overflow-hidden bg-[linear-gradient(90deg,#fff_4px,#e2e2f2_9px,#d0d0e6_17px)]">
      <SideGrip className="h-[18px]" />
      <Tool icon="arrow" flyout className="mr-[-3px] h-[35px] w-[35px]" />
      <SideGrip className="h-5" />
      <Tool icon="gear" className="mr-[-3px] h-[35px] w-[35px]" />
      <SideGrip className="h-7" />
      <Tool icon="sketch" flyout className="mr-[-3px] h-[35px] w-[35px]" />
      <SideGrip className="h-[21px]" />
      {design.map((icon) => (
        <Tool key={icon} icon={icon} flyout={flyouts.includes(icon)} className="mr-[-3px] h-[35px] w-[35px]" />
      ))}
      <SideGrip className="h-[21px]" />
      {dress.map((icon) => (
        <Tool key={icon} icon={icon} flyout={flyouts.includes(icon)} className="mr-[-3px] h-[35px] w-[35px]" />
      ))}
      <SideGrip className="h-[21px]" />
      <Tool icon="point" flyout className="mr-[-3px] h-[35px] w-[35px]" />
    </aside>
  );
}

// End points of the fillet along the front edge, from top face to side face
const filletEdge = [
  [946, 650], [938, 656], [930, 661], [923, 666], [916, 672], [910, 679], [905, 687],
  [900, 694], [896, 701], [893, 708], [891, 715], [889, 722],
];
const filletColors = [
  "#c5c5ec", "#c5c5ec", "#c7c7ee", "#cacaf2", "#dadafa", "#ffffff",
  "#e4e4fc", "#d0d0f4", "#c4c4ea", "#b9b9dd", "#afafd2",
];

function Scene() {
  return (
    <svg className="absolute inset-0 h-full w-full" viewBox="0 97 1853 970" aria-label="Part1 solid">
      <defs>
        <linearGradient id="topFace" x1="720" y1="567" x2="862" y2="353" gradientUnits="userSpaceOnUse">
          <stop offset="0" stopColor="#c3c3ea" />
          <stop offset="0.35" stopColor="#bebee3" />
          <stop offset="1" stopColor="#b6b6da" />
        </linearGradient>
        <linearGradient id="sideFace" x1="481" y1="500" x2="560" y2="510" gradientUnits="userSpaceOnUse">
          <stop offset="0" stopColor="#b6b6dc" />
          <stop offset="1" stopColor="#a8a8ca" />
        </linearGradient>
        <linearGradient id="rim" x1="800" y1="330" x2="1180" y2="530" gradientUnits="userSpaceOnUse">
          <stop offset="0" stopColor="#a6a6ca" stopOpacity="0" />
          <stop offset="0.7" stopColor="#9494b8" />
          <stop offset="1" stopColor="#a0a0c4" />
        </linearGradient>
        <radialGradient id="ballFill" cx="0.4" cy="0.3">
          <stop offset="0" stopColor="#fff04a" />
          <stop offset="0.55" stopColor="#f0b040" />
          <stop offset="1" stopColor="#d860c0" />
        </radialGradient>
        <pattern id="dither" width="1.7143" height="1.7143" patternUnits="userSpaceOnUse">
          <rect width="0.8571" height="0.8571" fill="#d0d0d0" />
          <rect x="0.8571" y="0.8571" width="0.8571" height="0.8571" fill="#d0d0d0" />
        </pattern>
        <filter id="soft" x="-10%" y="-10%" width="120%" height="120%">
          <feGaussianBlur stdDeviation="4" />
        </filter>
        <filter id="blend" x="-10%" y="-10%" width="120%" height="120%">
          <feGaussianBlur stdDeviation="1.5" />
        </filter>
        <clipPath id="topClip">
          <path d="M503 390C504 372 505 367 507 358C516 318 566 284 658 284C714 284 757 298 790 314L1180 526V536C1110 564 1026 605 960 641C925 663 895 684 889 722L545 452C518 431 504 408 503 390Z" />
        </clipPath>
      </defs>
      <path d="M503 390C505 409 518 431 545 452L889 722L865 905L514 626C490 603 480 585 481 552Z" fill="url(#sideFace)" />
      <g clipPath="url(#topClip)">
        <rect x="480" y="270" width="720" height="470" fill="url(#topFace)" />
        <path d="M790 309L1186 524" stroke="url(#rim)" strokeWidth="14" filter="url(#soft)" />
        <g filter="url(#blend)">
          {filletColors.map((color, i) => (
            <path
              key={i}
              d={`M543 450L${filletEdge[i][0]} ${filletEdge[i][1]}L${filletEdge[i + 1][0]} ${filletEdge[i + 1][1]}Z`}
              fill={color}
              stroke={color}
            />
          ))}
        </g>
      </g>
      <path d="M1180 536C1111 564 1026 605 960 641C915 668 893 690 889 722L865 905L1180 741Z" fill="#6a6a7e" />

      <g fill="none" stroke="#d2c8fa" strokeWidth="2.5" strokeLinejoin="round">
        <path d="M1732 147C1712 134 1688 137 1686 165L1726 192L1766 172C1768 140 1748 138 1732 147Z" fill="#000040" />
        <path d="M1678 226C1684 196 1760 190 1764 233L1721 255Z" fill="#1c4660" />
        <path d="M1734 135L1722 226" />
      </g>
      <circle cx="1734" cy="135" r="4.500" fill="#d2c8fa" />
      <rect x="1716" y="224" width="12" height="12" fill="#cc0000" />
      <g fill="#e8e840" fontSize="17" fontFamily="Open Sans, sans-serif" textAnchor="middle">
        <text x="1737" y="127">z</text>
        <text x="1691" y="157">y</text>
        <text x="1768" y="161">x</text>
      </g>

      <path d="M1797 1022L1811 1032L1830 1021M1811 1032L1814 1010" fill="none" stroke="#fff" strokeWidth="1.2" />
      <g fill="#fff" fontSize="17" fontFamily="Open Sans, sans-serif" textAnchor="middle">
        <text x="1818" y="1010">z</text>
        <text x="1834" y="1022">x</text>
        <text x="1766" y="1043">0.482</text>
      </g>
    </svg>
  );
}

function FeatureTree() {
  return (
    <ul className="absolute top-[-6px] left-0 flex h-[300px] flex-col justify-between text-[17px] leading-5 text-white">
      {treeNodes.map((node) => (
        <li key={node.name} className={`flex h-[33px] items-center ${node.row}`}>
          <div className={`mr-[-4px] h-0.5 shrink-0 bg-white ${node.link}`} />
          <Icon name={node.icon} className={node.icon === "part" ? "mt-1 h-7 w-[17px]" : "mt-1 h-7 w-7"} />
          <span className={node.current ? "border-b-2 border-white leading-4" : ""}>{node.name}</span>
        </li>
      ))}
      <li className="flex h-[33px] items-center pl-4">
        <div className="h-7 w-3.5 shrink-0 self-start border-b-2 border-l-2 border-white" />
        <Icon name="draftTree" className="mt-1 h-7 w-7" />
        <span className="ml-[5px]">Draft Analysis.1</span>
      </li>
    </ul>
  );
}

interface PaletteProps {
  title: string;
  className: string;
  children: ReactNode;
  wide?: boolean;
}

function Palette({ title, className, children, wide }: PaletteProps) {
  return (
    <section className={`absolute overflow-hidden bg-[#d0d0e6] shadow-[1px_2px_6px_rgba(0,0,0,0.45)] ${className}`}>
      <div className="flex h-[37px] items-center justify-between bg-white pr-px">
        <h2 className={`overflow-hidden text-[16px] leading-5 whitespace-nowrap text-[#9a9a9a] ${wide ? "pl-2.5" : "w-[17px] pl-2"}`}>
          {title}
        </h2>
        <button type="button" aria-label="Close palette" className="size-[25px] shrink-0 bg-[#e8e8e8]" />
      </div>
      {wide ? (
        <div className="flex h-11 items-center bg-[linear-gradient(#fff,#d0d0e6_14px,#d0d0e6_32px,#9c9cac)] px-[7px] pt-1.5">{children}</div>
      ) : (
        <div className="flex flex-col items-center bg-[linear-gradient(90deg,#fff,#d0d0e6_14px,#d0d0e6_32px,#a0a0b0)] pt-[7px] pb-px pl-1">
          {children}
        </div>
      )}
    </section>
  );
}

function PushButton({ icon, pressed, className = "size-[35px]" }: { icon: string; pressed?: boolean; className?: string }) {
  return (
    <button
      type="button"
      aria-label={icon}
      className={`flex shrink-0 items-center justify-center border-2 ${className} ${
        pressed
          ? "border-t-[#77705f] border-l-[#77705f] border-r-white border-b-white bg-[#faeedd]"
          : "border-t-[#fff6e4] border-l-[#fff6e4] border-r-[#8a8272] border-b-[#8a8272] bg-[#f4e6c8]"
      }`}
    >
      <Icon name={icon} className="size-6" />
    </button>
  );
}

function Group({ title, className, children }: { title: string; className: string; children: ReactNode }) {
  return (
    <fieldset className={`min-w-0 border border-[#a89e88] ${className}`}>
      <legend className="ml-1 px-[5px] leading-5">{title}</legend>
      {children}
    </fieldset>
  );
}

function DraftDialog() {
  const directions = [
    ["Dir X :", "-0.00"],
    ["Dir Y :", "-0.00"],
    ["Dir Z :", "-1.00"],
  ];
  return (
    <section
      role="dialog"
      aria-label="Draft Analysis"
      className="absolute top-[423px] left-[1179px] w-[248px] overflow-hidden border border-[#3a88b0] bg-[#f8e7c3] text-[15px] text-[#2a2a2a] shadow-[0_3px_12px_rgba(0,0,0,0.5)]"
    >
      <div className="flex h-9 items-center bg-white pl-[9px]">
        <h2 className="w-[140px] text-black">Draft Analysis</h2>
        <button type="button" aria-label="Help" className="w-5">
          ?
        </button>
        <button type="button" aria-label="Close" className="ml-[38px]">
          <X className="size-[18px]" strokeWidth={1.4} />
        </button>
      </div>
      <div className="relative flex flex-col gap-2 bg-[linear-gradient(#ede0c6,#f9e8c2_50%,#fbe8bd)] px-3 pt-[13px] pb-2.5">
        <svg className="absolute bottom-0 left-0 h-14 w-20" viewBox="0 0 80 56" aria-hidden="true">
          <defs>
            <radialGradient id="glow" cx="0.25" cy="0.9" r="0.8">
              <stop offset="0" stopColor="#f8b040" />
              <stop offset="1" stopColor="#fbe8bd" stopOpacity="0" />
            </radialGradient>
            <linearGradient id="globe" x1="0" y1="0" x2="0.3" y2="1">
              <stop offset="0" stopColor="#b8a888" />
              <stop offset="0.5" stopColor="#5a8aa8" />
              <stop offset="1" stopColor="#3c6c94" />
            </linearGradient>
          </defs>
          <rect width="80" height="56" fill="url(#glow)" />
          <path d="M0 34C18 32 40 38 52 56H0z" fill="url(#globe)" />
        </svg>
        <Group title="Elements" className="pt-1 pb-1">
          <div className="flex items-center gap-px pr-1 pl-1.5">
            <input
              aria-label="Elements"
              readOnly
              value="No selection"
              className="h-6 min-w-0 flex-1 border border-[#88887c] bg-white px-1 outline-none"
            />
            <PushButton icon="hand" className="size-7" />
          </div>
        </Group>
        <Group title="Display" className="pt-px pb-0.5">
          <div className="flex justify-between px-3">
            <PushButton icon="colorScale" />
            <PushButton icon="flyProbe" pressed />
            <PushButton icon="noHighlight" />
            <PushButton icon="bulb" />
          </div>
        </Group>
        <Group title="Direction" className="pt-px pb-0.5">
          <div className="flex justify-between px-[21px]">
            <PushButton icon="lockDir" />
            <PushButton icon="compass" />
            <PushButton icon="surfaceDir" />
          </div>
        </Group>
        <div className="flex justify-between">
          <Group title="Mode" className="w-[93px] pt-px">
            <div className="flex justify-between px-[7px]">
              <PushButton icon="quickMode" pressed />
              <PushButton icon="fullMode" />
            </div>
          </Group>
          <Group title="Direction" className="h-[109px] w-[122px] pt-0.5">
            <dl className="pl-[7px]">
              {directions.map(([name, value]) => (
                <div key={name} className="flex h-7 items-center">
                  <dt className="w-[55px]">{name}</dt>
                  <dd>{value}</dd>
                </div>
              ))}
            </dl>
          </Group>
        </div>
        <div className="relative flex justify-end gap-3 pt-[5px] pr-px">
          <button
            type="button"
            className="flex h-[30px] w-[91px] items-center justify-center gap-2 border-2 border-[#55555c] border-t-[#3c3c44] bg-[#cdcde2] outline-1 -outline-offset-4 outline-dotted outline-black"
          >
            <span className="size-3.5 rounded-full bg-[radial-gradient(circle_at_40%_30%,#c8f0c0,#2a9c2a_45%,#0a5c14)]" />
            OK
          </button>
          <button
            type="button"
            className="flex h-[30px] w-[91px] items-center justify-center gap-2 border-2 border-[#f4f4fc] border-r-[#84848c] border-b-[#84848c] bg-[#cdcde2]"
          >
            <span className="size-3.5 rounded-full bg-[radial-gradient(circle_at_40%_30%,#ffd0c8,#dc3c34_45%,#8c1010)]" />
            Cancel
          </button>
        </div>
      </div>
    </section>
  );
}

function Viewport() {
  return (
    <main className="relative min-w-0 flex-1 overflow-hidden bg-[linear-gradient(#353566,#3b3b6a_25%,#444474_55%,#4a4a7a_64%,#727296_80%,#acacc2)]">
      <Scene />
      <FeatureTree />
      <Palette title="R" className="top-[292px] right-[19px] w-11">
        <Tool icon="point" />
        <Tool icon="line" />
        <Tool icon="plane" />
      </Palette>
      <Palette title="C" className="top-[398px] right-[87px] w-11">
        <Tool icon="dimGray" />
        <Tool icon="dimBox" />
      </Palette>
      <Palette title="I." className="top-[601px] right-[87px] w-11">
        <Tool icon="gears" />
        <Tool icon="sheet" flyout />
        <Tool icon="treeGear" />
      </Palette>
      <Palette title="A" className="top-[539px] right-0 w-[46px]">
        <Tool icon="textNote" flyout />
        <Tool icon="flagNote" flyout />
        <Tool icon="datumGray" />
        <Tool icon="datum" />
        <Tool icon="anchorA" />
      </Palette>
      <Palette title="Pro..." wide className="right-[323px] bottom-[70px] w-20">
        <Tool icon="openBox" flyout />
        <Tool icon="folderBox" flyout />
      </Palette>
      <Palette title="Analysis" wide className="right-[47px] bottom-[46px] w-[185px]">
        <Tool icon="orangeBlob" />
        <Tool icon="curvature" />
        <Tool icon="targetLens" />
        <Tool icon="holeLens" />
        <Tool icon="dotsGear" />
      </Palette>
      <DraftDialog />
      <svg className="absolute top-[643px] left-[1312px] h-[26px] w-4" viewBox="0 0 16 26" aria-hidden="true">
        <path d="M1 1v19l4-4 4 9 4-2-4-8h6z" fill="#fff" stroke="#000" />
      </svg>
    </main>
  );
}

function BottomToolbar() {
  const standard = ["newDoc", "openDoc", "save", "print", "cut", "copy", "paste", "undo", "redo", "help"];
  const view = [
    "fly", "fit", "pan", "rotate", "zoomIn", "zoomOut", "normal", "multiView", "isoCube", "cylinder", "hideShow", "swapSpace",
  ];
  const knowledge = ["formula", "comment", "linkGray", "table", "lock", "equiv"];
  const tools = ["update", "handUpdate", "axis", "tolerance", "boxCyan", "linkBreak", "stack", "prism"];
  const flyouts = ["undo", "redo", "isoCube", "cylinder", "table", "lock", "boxCyan"];
  const render = (icon: string) => (
    <Tool key={icon} icon={icon} flyout={flyouts.includes(icon)} className="h-[35px] w-[35px]" />
  );
  return (
    <footer className="relative flex h-[43px] shrink-0 items-end overflow-hidden bg-[linear-gradient(#fff,#e4e4f3_8px,#d0d0e6_18px,#d0d0e5_34px,#b0b0c0)] pl-0.5">
      {standard.map(render)}
      <Grip className="w-[105px]" />
      {view.map(render)}
      <Grip />
      {knowledge.map((icon) => (
        <Tool key={icon} icon={icon} flyout={flyouts.includes(icon)} className="h-[35px] w-[34px]" />
      ))}
      <Grip />
      {render("cubeBall")}
      <Grip />
      {["ruler", "caliper", "weight"].map(render)}
      <Grip />
      {tools.map(render)}
      <Combo label="Current set" value="Geometrical Set.1" className="h-[33px] w-[227px] text-[16px]" textClass="pl-[5px] pr-6" />
      <svg className="ml-3 h-[38px] w-8 shrink-0 self-start" viewBox="0 0 36 42" fill="none" strokeWidth="3" aria-label="DS">
        <path d="M13 2c8-1 9 1 4 9" stroke="#d8202c" />
        <path d="M7 15c8-2 12 2 8 8-3 5-8 7-13 6 5-3 7-8 8-12" stroke="#3a3a8c" />
        <path d="M31 11c-10 0-9 4-5 7 4 4 1 7-7 9" stroke="#f0b83a" />
      </svg>
      <div className="absolute right-px bottom-0 flex h-3 w-[376px] items-end overflow-hidden rounded-t-md bg-[#1c1c1e]">
        <svg className="h-1 w-full" viewBox="0 0 376 4" preserveAspectRatio="none" aria-hidden="true">
          <path d="M20 2h3v2h-3zM27 2h3v2h-3zM266 2h10v2h-10zM351 1h20v3h-20z" fill="#eee" />
          <rect x="56" y="1" width="18" height="3" fill="#e03c3c" />
          <path
            d="M121 4l2-3h6l2 3M133 4l2-3h6l2 3M151 4l2-3h6l2 3M163 4l2-3h6l2 3M196 4l4-3M204 4V1l4 3 4-3v3"
            fill="none"
            stroke="#fff"
            strokeWidth="2"
          />
        </svg>
      </div>
    </footer>
  );
}

export default function App() {
  return (
    <div className="flex h-screen flex-col overflow-hidden bg-[#d0d0e6] font-['Open_Sans','Noto_Sans',sans-serif]">
      <TitleBar />
      <MenuBar />
      <TopToolbar />
      <div className="flex min-h-0 flex-1">
        <Viewport />
        <SideToolbar />
      </div>
      <BottomToolbar />
    </div>
  );
}
